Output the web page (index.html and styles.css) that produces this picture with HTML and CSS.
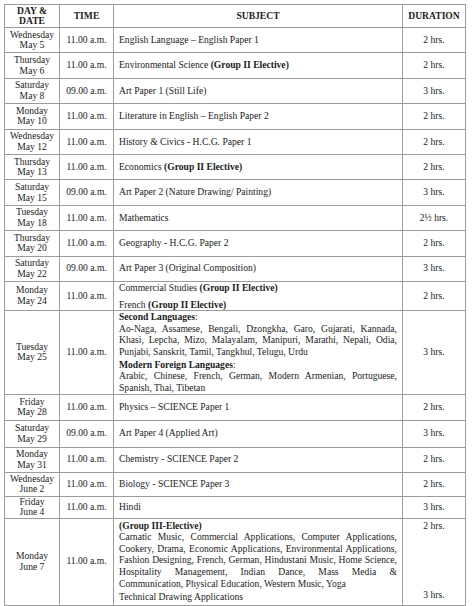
FILE: index.html
```html
<!DOCTYPE html>
<html lang="en">
<head>
<meta charset="utf-8">
<title>ICSE Examination Timetable</title>
<link rel="stylesheet" href="styles.css">
</head>
<body>
<table class="timetable">
  <colgroup>
    <col class="c-day">
    <col class="c-time">
    <col class="c-subject">
    <col class="c-dur">
  </colgroup>
  <thead>
    <tr class="head">
      <th>DAY &amp;<br>DATE</th>
      <th>TIME</th>
      <th>SUBJECT</th>
      <th>DURATION</th>
    </tr>
  </thead>
  <tbody>
    <tr class="row">
      <td class="day">Wednesday<br>May 5</td><td class="time">11.00 a.m.</td>
      <td class="subj">English Language – English Paper 1</td><td class="dur">2 hrs.</td>
    </tr>
    <tr class="row">
      <td class="day">Thursday<br>May 6</td><td class="time">11.00 a.m.</td>
      <td class="subj">Environmental Science <b>(Group II Elective)</b></td><td class="dur">2 hrs.</td>
    </tr>
    <tr class="row">
      <td class="day">Saturday<br>May 8</td><td class="time">09.00 a.m.</td>
      <td class="subj">Art Paper 1 (Still Life)</td><td class="dur">3 hrs.</td>
    </tr>
    <tr class="row">
      <td class="day">Monday<br>May 10</td><td class="time">11.00 a.m.</td>
      <td class="subj">Literature in English – English Paper 2</td><td class="dur">2 hrs.</td>
    </tr>
    <tr class="row">
      <td class="day">Wednesday<br>May 12</td><td class="time">11.00 a.m.</td>
      <td class="subj">History &amp; Civics - H.C.G. Paper 1</td><td class="dur">2 hrs.</td>
    </tr>
    <tr class="row">
      <td class="day">Thursday<br>May 13</td><td class="time">11.00 a.m.</td>
      <td class="subj">Economics <b>(Group II Elective)</b></td><td class="dur">2 hrs.</td>
    </tr>
    <tr class="row">
      <td class="day">Saturday<br>May 15</td><td class="time">09.00 a.m.</td>
      <td class="subj">Art Paper 2 (Nature Drawing/ Painting)</td><td class="dur">3 hrs.</td>
    </tr>
    <tr class="row">
      <td class="day">Tuesday<br>May 18</td><td class="time">11.00 a.m.</td>
      <td class="subj">Mathematics</td><td class="dur">2½ hrs.</td>
    </tr>
    <tr class="row">
      <td class="day">Thursday<br>May 20</td><td class="time">11.00 a.m.</td>
      <td class="subj">Geography - H.C.G. Paper 2</td><td class="dur">2 hrs.</td>
    </tr>
    <tr class="row">
      <td class="day">Saturday<br>May 22</td><td class="time">09.00 a.m.</td>
      <td class="subj">Art Paper 3 (Original Composition)</td><td class="dur">3 hrs.</td>
    </tr>
    <tr class="row-pair">
      <td class="day">Monday<br>May 24</td><td class="time">11.00 a.m.</td>
      <td class="subj">
        <div class="para">Commercial Studies <b>(Group II Elective)</b></div>
        <div class="para gap">French <b>(Group II Elective)</b></div>
      </td>
      <td class="dur">2 hrs.</td>
    </tr>
    <tr class="row-lang">
      <td class="day">Tuesday<br>May 25</td><td class="time">11.00 a.m.</td>
      <td class="subj multi">
        <div class="ln"><b>Second Languages</b>:</div>
        <div class="ln jl">Ao-Naga, Assamese, Bengali, Dzongkha, Garo, Gujarati, Kannada,</div>
        <div class="ln jl">Khasi, Lepcha, Mizo, Malayalam, Manipuri, Marathi, Nepali, Odia,</div>
        <div class="ln">Punjabi, Sanskrit, Tamil, Tangkhul, Telugu, Urdu</div>
        <div class="ln sep"><b>Modern Foreign Languages</b>:</div>
        <div class="ln jl">Arabic, Chinese, French, German, Modern Armenian, Portuguese,</div>
        <div class="ln">Spanish, Thai, Tibetan</div>
      </td>
      <td class="dur">3 hrs.</td>
    </tr>
    <tr class="row-b">
      <td class="day">Friday<br>May 28</td><td class="time">11.00 a.m.</td>
      <td class="subj">Physics – SCIENCE Paper 1</td><td class="dur">2 hrs.</td>
    </tr>
    <tr class="row-c">
      <td class="day">Saturday<br>May 29</td><td class="time">09.00 a.m.</td>
      <td class="subj">Art Paper 4 (Applied Art)</td><td class="dur">3 hrs.</td>
    </tr>
    <tr class="row-d">
      <td class="day">Monday<br>May 31</td><td class="time">11.00 a.m.</td>
      <td class="subj">Chemistry - SCIENCE Paper 2</td><td class="dur">2 hrs.</td>
    </tr>
    <tr class="row-e">
      <td class="day">Wednesday<br>June 2</td><td class="time">11.00 a.m.</td>
      <td class="subj">Biology - SCIENCE Paper 3</td><td class="dur">2 hrs.</td>
    </tr>
    <tr class="row-f">
      <td class="day">Friday<br>June 4</td><td class="time">11.00 a.m.</td>
      <td class="subj">Hindi</td><td class="dur">3 hrs.</td>
    </tr>
    <tr class="row-last">
      <td class="day">Monday<br>June 7</td><td class="time">11.00 a.m.</td>
      <td class="subj multi top">
        <div class="ln"><b>(Group III-Elective)</b></div>
        <div class="ln jl">Carnatic Music, Commercial Applications, Computer Applications,</div>
        <div class="ln jl">Cookery, Drama, Economic Applications, Environmental Applications,</div>
        <div class="ln jl">Fashion Designing, French, German, Hindustani Music, Home Science,</div>
        <div class="ln jl">Hospitality Management, Indian Dance, Mass Media &amp;</div>
        <div class="ln">Communication, Physical Education, Western Music, Yoga</div>
        <div class="ln sep">Technical Drawing Applications</div>
      </td>
      <td class="dur split">
        <div class="dur-top">2 hrs.</div>
        <div class="dur-bottom">3 hrs.</div>
      </td>
    </tr>
  </tbody>
</table>
</body>
</html>
```

FILE: styles.css
```css
html, body {
  margin: 0;
  padding: 0;
  background: #ffffff;
}

body {
  font-family: "Liberation Serif", "Times New Roman", serif;
  font-size: 9.6px;
  color: #1c1c1c;
}

.timetable {
  margin: 4px 0 0 4px;
  border-collapse: collapse;
  table-layout: fixed;
  width: 461px;
  border: 1px solid #8f8f8f;
}

.c-day { width: 55px; }
.c-time { width: 54px; }
.c-subject { width: 289px; }
.c-dur { width: 63px; }

.timetable th,
.timetable td {
  border: 1px solid #9c9c9c;
  padding: 0 5px;
  vertical-align: middle;
  line-height: 10.5px;
}

.timetable th {
  font-weight: bold;
  text-align: center;
  font-size: 9.6px;
}

.head { height: 23px; }
.row { height: 25.4px; }
.row-pair { height: 29px; }
.row-lang { height: 83px; }
.row-b { height: 26px; }
.row-c { height: 27px; }
.row-d { height: 25px; }
.row-e { height: 24px; }
.row-f { height: 22px; }
.row-last { height: 86px; }

.day {
  text-align: center;
  padding: 0 2px;
}

.time {
  text-align: center;
}

.subj {
  text-align: left;
}

.dur {
  text-align: center;
}

.para {
  line-height: 11px;
}

.para.gap {
  margin-top: 6px;
}

.multi .ln {
  line-height: 11.6px;
}

.multi .ln.sep {
  margin-top: 1.5px;
}

.jl {
  text-align: justify;
  text-align-last: justify;
}

.subj.top {
  vertical-align: top;
  padding-top: 1px;
}

.dur.split {
  vertical-align: top;
  padding-top: 1px;
  padding-bottom: 3px;
}

.dur.split {
  height: 82px;
}

.dur-top,
.dur-bottom {
  line-height: 11.6px;
}

.dur-bottom {
  margin-top: 58px;
}
```
